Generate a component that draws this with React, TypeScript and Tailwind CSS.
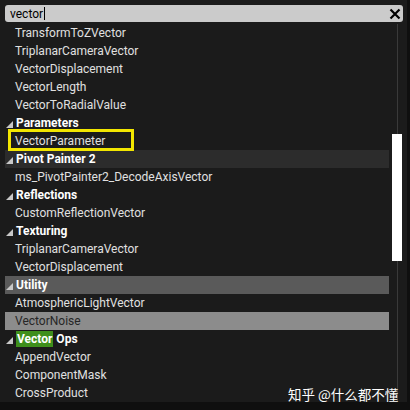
const font = { fontFamily: 'Roboto, "Noto Sans CJK SC", sans-serif' };

type Row =
    | { kind: 'item'; text: string; selected?: boolean; boxed?: boolean }
    | { kind: 'header'; text: string; bg?: string; match?: boolean };

const rows: Row[] = [
    { kind: 'item', text: 'TransformToZVector' },
    { kind: 'item', text: 'TriplanarCameraVector' },
    { kind: 'item', text: 'VectorDisplacement' },
    { kind: 'item', text: 'VectorLength' },
    { kind: 'item', text: 'VectorToRadialValue' },
    { kind: 'header', text: 'Parameters' },
    { kind: 'item', text: 'VectorParameter', boxed: true },
    { kind: 'header', text: 'Pivot Painter 2', bg: 'bg-[#2c2c2c]' },
    { kind: 'item', text: 'ms_PivotPainter2_DecodeAxisVector' },
    { kind: 'header', text: 'Reflections' },
    { kind: 'item', text: 'CustomReflectionVector' },
    { kind: 'header', text: 'Texturing' },
    { kind: 'item', text: 'TriplanarCameraVector' },
    { kind: 'item', text: 'VectorDisplacement' },
    { kind: 'header', text: 'Utility', bg: 'bg-[#5a5a5a]' },
    { kind: 'item', text: 'AtmosphericLightVector' },
    { kind: 'item', text: 'VectorNoise', selected: true },
    { kind: 'header', text: 'Vector Ops', match: true },
    { kind: 'item', text: 'AppendVector' },
    { kind: 'item', text: 'ComponentMask' },
    { kind: 'item', text: 'CrossProduct' },
];

function Arrow() {
    return (
        <svg width="7" height="7" viewBox="0 0 7 7" className="mr-[3px] mt-[2px] shrink-0">
            <polygon points="7,0 7,7 0,7" fill="#c8c8c8" />
        </svg>
    );
}

function ListRow({ row }: { row: Row }) {
    if (row.kind === 'header') {
        return (
            <div className={`flex h-[18px] items-center pl-[1px] ${row.bg ?? ''}`}>
                <Arrow />
                {row.match ? (
                    <span className="text-[12px] font-bold text-white">
                        <span className="bg-[#3e8f1c] px-[1px] py-[1px]">Vector</span> Ops
                    </span>
                ) : (
                    <span className="text-[12px] font-bold text-white">{row.text}</span>
                )}
            </div>
        );
    }
    return (
        <div className={`relative flex h-[18px] items-center pl-[10px] ${row.selected ? 'bg-[#8c8c8c]' : ''}`}>
            <span className={`text-[12px] ${row.selected ? 'text-[#262626]' : 'text-[#e0e0e0]'}`}>{row.text}</span>
            {row.boxed && (
                <div className="absolute left-[3px] top-[-3px] h-[22px] w-[126px] border-[3px] border-[#f2e600]" />
            )}
        </div>
    );
}

export default function App() {
    return (
        <div className="relative h-[410px] w-[410px] overflow-hidden bg-[#0f0f0f]" style={font}>
            <div className="h-[402px] w-[407px] bg-[#1b1b1b] pt-[5px]">
                <div className="ml-[5px] flex h-[17px] w-[398px] items-center rounded-[3px] bg-[#cbcbcb] pl-[5px] pr-[2px]">
                    <span className="text-[12px] leading-none text-black">vector</span>
                    <span className="ml-[1px] h-[13px] w-px bg-black" />
                    <svg width="12" height="12" viewBox="0 0 12 12" className="ml-auto">
                        <path d="M1.5 1.5 L10.5 10.5 M10.5 1.5 L1.5 10.5" stroke="#000" strokeWidth="2.2" />
                    </svg>
                </div>
                <div className="mt-[2px] flex">
                    <div className="ml-[5px] w-[384px]">
                        {rows.map((row, i) => (
                            <ListRow key={i} row={row} />
                        ))}
                    </div>
                    <div className="relative ml-[3px] w-[10px]">
                        <div className="absolute left-[5px] top-0 h-[378px] w-px bg-[#3a3a3a]" />
                        <div className="absolute left-0 top-[110px] h-[127px] w-[10px] bg-white" />
                    </div>
                </div>
            </div>
            <div className="absolute left-[288px] top-[384px] text-[13.5px] text-white" style={{ fontFamily: '"Noto Sans CJK SC", sans-serif' }}>
                知乎 @什么都不懂
            </div>
        </div>
    );
}
